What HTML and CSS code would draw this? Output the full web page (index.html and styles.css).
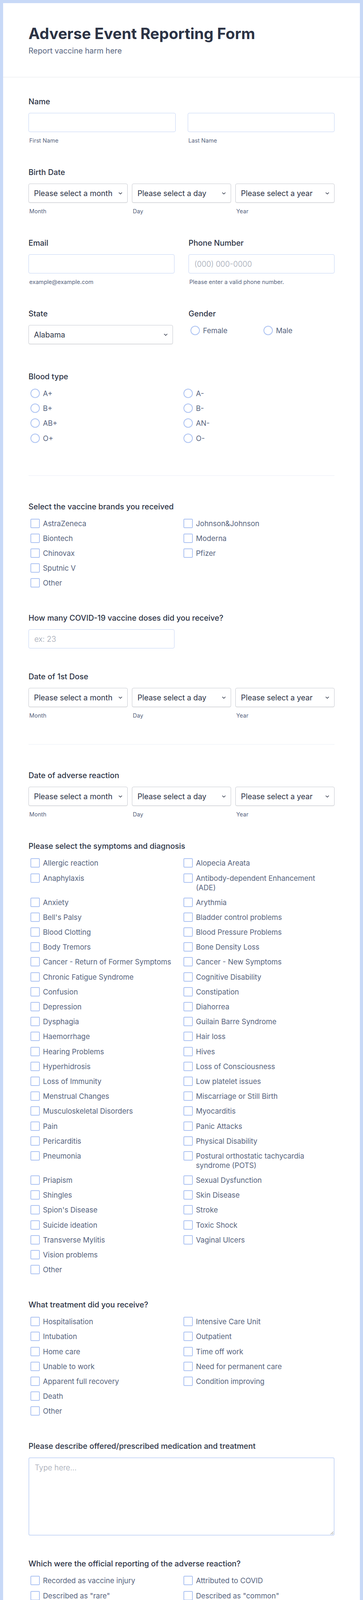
FILE: index.html
```html
<!DOCTYPE html>
<html lang="en">
<head>
  <meta charset="UTF-8" />
  <meta name="viewport" content="width=device-width, initial-scale=1.0" />
  <title>Adverse Event Reporting Form</title>
  <link rel="stylesheet" href="styles.css">
</head>
<body>

  <form class="form-card" onsubmit="return false">
    <header class="form-header">
      <h1>Adverse Event Reporting Form</h1>
      <p>Report vaccine harm here</p>
    </header>

    <div class="form-body">

      <div class="field">
        <label class="field-label">Name</label>
        <div class="cols-2 name-cols">
          <div>
            <input type="text" class="text-input" />
            <span class="sublabel">First Name</span>
          </div>
          <div>
            <input type="text" class="text-input" />
            <span class="sublabel">Last Name</span>
          </div>
        </div>
      </div>

      <div class="field">
        <label class="field-label">Birth Date</label>
        <div class="date-cols">
          <div>
            <div class="select-wrap">
              <select><option>Please select a month</option></select>
              <svg class="chevron" viewBox="0 0 10 6"><path d="M1 1l4 4 4-4" /></svg>
            </div>
            <span class="sublabel">Month</span>
          </div>
          <div>
            <div class="select-wrap">
              <select><option>Please select a day</option></select>
              <svg class="chevron" viewBox="0 0 10 6"><path d="M1 1l4 4 4-4" /></svg>
            </div>
            <span class="sublabel">Day</span>
          </div>
          <div>
            <div class="select-wrap">
              <select><option>Please select a year</option></select>
              <svg class="chevron" viewBox="0 0 10 6"><path d="M1 1l4 4 4-4" /></svg>
            </div>
            <span class="sublabel">Year</span>
          </div>
        </div>
      </div>

      <div class="cols-2 field-pair">
        <div class="field">
          <label class="field-label">Email</label>
          <input type="email" class="text-input" />
          <span class="sublabel">example@example.com</span>
        </div>
        <div class="field">
          <label class="field-label">Phone Number</label>
          <input type="tel" class="text-input" placeholder="(000) 000-0000" />
          <span class="sublabel">Please enter a valid phone number.</span>
        </div>
      </div>

      <div class="cols-2 field-pair gap-lg">
        <div class="field">
          <label class="field-label">State</label>
          <div class="select-wrap state-select">
            <select><option>Alabama</option><option>Alaska</option><option>Arizona</option></select>
            <svg class="chevron" viewBox="0 0 10 6"><path d="M1 1l4 4 4-4" /></svg>
          </div>
        </div>
        <div class="field options">
          <label class="field-label">Gender</label>
          <div class="option-grid">
            <label class="option"><input type="radio" name="gender" /><span>Female</span></label>
            <label class="option"><input type="radio" name="gender" /><span>Male</span></label>
          </div>
        </div>
      </div>

      <div class="field options">
        <label class="field-label">Blood type</label>
        <div class="option-grid">
          <label class="option"><input type="radio" name="blood" /><span>A+</span></label>
          <label class="option"><input type="radio" name="blood" /><span>A-</span></label>
          <label class="option"><input type="radio" name="blood" /><span>B+</span></label>
          <label class="option"><input type="radio" name="blood" /><span>B-</span></label>
          <label class="option"><input type="radio" name="blood" /><span>AB+</span></label>
          <label class="option"><input type="radio" name="blood" /><span>AN-</span></label>
          <label class="option"><input type="radio" name="blood" /><span>O+</span></label>
          <label class="option"><input type="radio" name="blood" /><span>O-</span></label>
        </div>
      </div>

      <hr class="divider divider-wide" />

      <div class="field options">
        <label class="field-label">Select the vaccine brands you received</label>
        <div class="option-grid">
          <label class="option"><input type="checkbox" /><span>AstraZeneca</span></label>
          <label class="option"><input type="checkbox" /><span>Johnson&amp;Johnson</span></label>
          <label class="option"><input type="checkbox" /><span>Biontech</span></label>
          <label class="option"><input type="checkbox" /><span>Moderna</span></label>
          <label class="option"><input type="checkbox" /><span>Chinovax</span></label>
          <label class="option"><input type="checkbox" /><span>Pfizer</span></label>
          <label class="option"><input type="checkbox" /><span>Sputnic V</span></label>
          <label class="option other"><input type="checkbox" /><span>Other</span></label>
        </div>
      </div>

      <div class="field">
        <label class="field-label">How many COVID-19 vaccine doses did you receive?</label>
        <div class="cols-2 field-pair">
          <input type="number" class="text-input" placeholder="ex: 23" />
        </div>
      </div>

      <div class="field">
        <label class="field-label">Date of 1st Dose</label>
        <div class="date-cols">
          <div>
            <div class="select-wrap">
              <select><option>Please select a month</option></select>
              <svg class="chevron" viewBox="0 0 10 6"><path d="M1 1l4 4 4-4" /></svg>
            </div>
            <span class="sublabel">Month</span>
          </div>
          <div>
            <div class="select-wrap">
              <select><option>Please select a day</option></select>
              <svg class="chevron" viewBox="0 0 10 6"><path d="M1 1l4 4 4-4" /></svg>
            </div>
            <span class="sublabel">Day</span>
          </div>
          <div>
            <div class="select-wrap">
              <select><option>Please select a year</option></select>
              <svg class="chevron" viewBox="0 0 10 6"><path d="M1 1l4 4 4-4" /></svg>
            </div>
            <span class="sublabel">Year</span>
          </div>
        </div>
      </div>

      <hr class="divider divider-narrow" />

      <div class="field">
        <label class="field-label">Date of adverse reaction</label>
        <div class="date-cols">
          <div>
            <div class="select-wrap">
              <select><option>Please select a month</option></select>
              <svg class="chevron" viewBox="0 0 10 6"><path d="M1 1l4 4 4-4" /></svg>
            </div>
            <span class="sublabel">Month</span>
          </div>
          <div>
            <div class="select-wrap">
              <select><option>Please select a day</option></select>
              <svg class="chevron" viewBox="0 0 10 6"><path d="M1 1l4 4 4-4" /></svg>
            </div>
            <span class="sublabel">Day</span>
          </div>
          <div>
            <div class="select-wrap">
              <select><option>Please select a year</option></select>
              <svg class="chevron" viewBox="0 0 10 6"><path d="M1 1l4 4 4-4" /></svg>
            </div>
            <span class="sublabel">Year</span>
          </div>
        </div>
      </div>

      <div class="field options">
        <label class="field-label">Please select the symptoms and diagnosis</label>
        <div class="option-grid">
          <label class="option"><input type="checkbox" /><span>Allergic reaction</span></label>
          <label class="option"><input type="checkbox" /><span>Alopecia Areata</span></label>
          <label class="option"><input type="checkbox" /><span>Anaphylaxis</span></label>
          <label class="option"><input type="checkbox" /><span>Antibody-dependent Enhancement (ADE)</span></label>
          <label class="option"><input type="checkbox" /><span>Anxiety</span></label>
          <label class="option"><input type="checkbox" /><span>Arythmia</span></label>
          <label class="option"><input type="checkbox" /><span>Bell's Palsy</span></label>
          <label class="option"><input type="checkbox" /><span>Bladder control problems</span></label>
          <label class="option"><input type="checkbox" /><span>Blood Clotting</span></label>
          <label class="option"><input type="checkbox" /><span>Blood Pressure Problems</span></label>
          <label class="option"><input type="checkbox" /><span>Body Tremors</span></label>
          <label class="option"><input type="checkbox" /><span>Bone Density Loss</span></label>
          <label class="option"><input type="checkbox" /><span>Cancer - Return of Former Symptoms</span></label>
          <label class="option"><input type="checkbox" /><span>Cancer - New Symptoms</span></label>
          <label class="option"><input type="checkbox" /><span>Chronic Fatigue Syndrome</span></label>
          <label class="option"><input type="checkbox" /><span>Cognitive Disability</span></label>
          <label class="option"><input type="checkbox" /><span>Confusion</span></label>
          <label class="option"><input type="checkbox" /><span>Constipation</span></label>
          <label class="option"><input type="checkbox" /><span>Depression</span></label>
          <label class="option"><input type="checkbox" /><span>Diahorrea</span></label>
          <label class="option"><input type="checkbox" /><span>Dysphagia</span></label>
          <label class="option"><input type="checkbox" /><span>Guilain Barre Syndrome</span></label>
          <label class="option"><input type="checkbox" /><span>Haemorrhage</span></label>
          <label class="option"><input type="checkbox" /><span>Hair loss</span></label>
          <label class="option"><input type="checkbox" /><span>Hearing Problems</span></label>
          <label class="option"><input type="checkbox" /><span>Hives</span></label>
          <label class="option"><input type="checkbox" /><span>Hyperhidrosis</span></label>
          <label class="option"><input type="checkbox" /><span>Loss of Consciousness</span></label>
          <label class="option"><input type="checkbox" /><span>Loss of Immunity</span></label>
          <label class="option"><input type="checkbox" /><span>Low platelet issues</span></label>
          <label class="option"><input type="checkbox" /><span>Menstrual Changes</span></label>
          <label class="option"><input type="checkbox" /><span>Miscarriage or Still Birth</span></label>
          <label class="option"><input type="checkbox" /><span>Musculoskeletal Disorders</span></label>
          <label class="option"><input type="checkbox" /><span>Myocarditis</span></label>
          <label class="option"><input type="checkbox" /><span>Pain</span></label>
          <label class="option"><input type="checkbox" /><span>Panic Attacks</span></label>
          <label class="option"><input type="checkbox" /><span>Pericarditis</span></label>
          <label class="option"><input type="checkbox" /><span>Physical Disability</span></label>
          <label class="option"><input type="checkbox" /><span>Pneumonia</span></label>
          <label class="option"><input type="checkbox" /><span>Postural orthostatic tachycardia syndrome (POTS)</span></label>
          <label class="option"><input type="checkbox" /><span>Priapism</span></label>
          <label class="option"><input type="checkbox" /><span>Sexual Dysfunction</span></label>
          <label class="option"><input type="checkbox" /><span>Shingles</span></label>
          <label class="option"><input type="checkbox" /><span>Skin Disease</span></label>
          <label class="option"><input type="checkbox" /><span>Spion's Disease</span></label>
          <label class="option"><input type="checkbox" /><span>Stroke</span></label>
          <label class="option"><input type="checkbox" /><span>Suicide ideation</span></label>
          <label class="option"><input type="checkbox" /><span>Toxic Shock</span></label>
          <label class="option"><input type="checkbox" /><span>Transverse Mylitis</span></label>
          <label class="option"><input type="checkbox" /><span>Vaginal Ulcers</span></label>
          <label class="option"><input type="checkbox" /><span>Vision problems</span></label>
          <label class="option other"><input type="checkbox" /><span>Other</span></label>
        </div>
      </div>

      <div class="field options">
        <label class="field-label">What treatment did you receive?</label>
        <div class="option-grid">
          <label class="option"><input type="checkbox" /><span>Hospitalisation</span></label>
          <label class="option"><input type="checkbox" /><span>Intensive Care Unit</span></label>
          <label class="option"><input type="checkbox" /><span>Intubation</span></label>
          <label class="option"><input type="checkbox" /><span>Outpatient</span></label>
          <label class="option"><input type="checkbox" /><span>Home care</span></label>
          <label class="option"><input type="checkbox" /><span>Time off work</span></label>
          <label class="option"><input type="checkbox" /><span>Unable to work</span></label>
          <label class="option"><input type="checkbox" /><span>Need for permanent care</span></label>
          <label class="option"><input type="checkbox" /><span>Apparent full recovery</span></label>
          <label class="option"><input type="checkbox" /><span>Condition improving</span></label>
          <label class="option"><input type="checkbox" /><span>Death</span></label>
          <label class="option other"><input type="checkbox" /><span>Other</span></label>
        </div>
      </div>

      <div class="field">
        <label class="field-label">Please describe offered/prescribed medication and treatment</label>
        <textarea class="text-area" placeholder="Type here..."></textarea>
      </div>

      <div class="field options">
        <label class="field-label">Which were the official reporting of the adverse reaction?</label>
        <div class="option-grid">
          <label class="option"><input type="checkbox" /><span>Recorded as vaccine injury</span></label>
          <label class="option"><input type="checkbox" /><span>Attributed to COVID</span></label>
          <label class="option"><input type="checkbox" /><span>Described as "rare"</span></label>
          <label class="option"><input type="checkbox" /><span>Described as "common"</span></label>
          <label class="option"><input type="checkbox" /><span>Inconclusive</span></label>
          <label class="option other"><input type="checkbox" /><span>Other</span></label>
        </div>
      </div>

      <hr class="divider" />

      <div class="field options">
        <label class="field-label">What were your motivations for being vaccinated?</label>
        <div class="option-grid">
          <label class="option"><input type="checkbox" /><span>Belief to science</span></label>
          <label class="option"><input type="checkbox" /><span>Government policy</span></label>
          <label class="option"><input type="checkbox" /><span>Business requirement</span></label>
          <label class="option"><input type="checkbox" /><span>Educational requirement</span></label>
          <label class="option"><input type="checkbox" /><span>Peer pressure</span></label>
          <label class="option"><input type="checkbox" /><span>Advertising</span></label>
          <label class="option"><input type="checkbox" /><span>Celebrity influence</span></label>
          <label class="option"><input type="checkbox" /><span>Protect family</span></label>
          <label class="option"><input type="checkbox" /><span>Need of travel</span></label>
          <label class="option"><input type="checkbox" /><span>Common good</span></label>
          <label class="option other"><input type="checkbox" /><span>Other</span></label>
        </div>
      </div>

      <div class="field options statements">
        <label class="field-label">Which of the following statements have been told at site of vaccination?</label>
        <div class="option-list">
          <label class="option"><input type="checkbox" /><span>Was told that vaccines are perfectly safe</span></label>
          <label class="option"><input type="checkbox" /><span>Was told that side effects will be brief and harmless</span></label>
          <label class="option"><input type="checkbox" /><span>Was told that vaccines can cause harm but it is worth the risk</span></label>
          <label class="option"><input type="checkbox" /><span>Received a product information document</span></label>
          <label class="option"><input type="checkbox" /><span>Was told that the Government has indemnified vaccine manufacturers against all claims for the harm caused by their products.</span></label>
          <label class="option"><input type="checkbox" /><span>Was told the benefits and risks of the vaccine</span></label>
          <label class="option"><input type="checkbox" /><span>Medical staff checked medical history</span></label>
          <label class="option"><input type="checkbox" /><span>Was given time to think about it and get a second opinion</span></label>
          <label class="option"><input type="checkbox" /><span>Was advised that there is a system for reporting online the adverse consequences of vaccination.</span></label>
        </div>
      </div>

      <div class="field options">
        <label class="field-label">Attitude to COVID-19 vaccination</label>
        <div class="option-list">
          <label class="option"><input type="checkbox" /><span>I would accept another vaccination or booster shot if instructed by the authorities</span></label>
          <label class="option"><input type="checkbox" /><span>I would not accept another vaccination</span></label>
          <label class="option"><input type="checkbox" /><span>I will encourage friends to be vaccinated</span></label>
          <label class="option"><input type="checkbox" /><span>I will discourage friends from being vaccinated</span></label>
          <label class="option"><input type="checkbox" /><span>The vaccination program should stop</span></label>
        </div>
      </div>

      <div class="field last">
        <label class="field-label">Further questions and comments</label>
        <textarea class="text-area" placeholder="Type here..."></textarea>
      </div>

    </div>

    <div class="form-footer">
      <button type="submit" class="submit-btn">Submit</button>
    </div>
  </form>

</body>
</html>
```

FILE: styles.css
```css
html {
  background: #c8d9f7;
}

body {
  margin: 8px;
  font-family: Inter, "Noto Sans", Arial, sans-serif;
  color: #2c3345;
}

.form-card {
  background: #fff;
}

.form-header {
  padding: 55px 65px;
  border-bottom: 1px solid #e5e7eb;
}

.form-header h1 {
  margin: 0;
  font-size: 39px;
  line-height: 46px;
  font-weight: 700;
  color: #2c3345;
}

.form-header p {
  margin: 9px 0 0;
  font-size: 19.6px;
  line-height: 24px;
  color: #57647e;
}

.form-body {
  padding: 50px 65px 31px;
}

.field {
  margin-bottom: 60px;
}

.field.options {
  margin-bottom: 66px;
}

.field.statements {
  margin-bottom: 60px;
}

.field.last {
  margin-bottom: 0;
}

.field-label {
  display: block;
  font-size: 19.8px;
  line-height: 24px;
  font-weight: 500;
  color: #2c3345;
  margin-bottom: 17px;
}

.options .field-label {
  margin-bottom: 19px;
}

.cols-2 {
  display: grid;
  grid-template-columns: 1fr 1fr;
}

.name-cols {
  column-gap: 31px;
}

.field-pair {
  column-gap: 36px;
}

.field-pair .field {
  margin-bottom: 0;
}

.field-pair + .field,
.field-pair + .field-pair {
  margin-top: 60px;
}

.field-pair.gap-lg + .field {
  margin-top: 71px;
}

.date-cols {
  display: grid;
  grid-template-columns: repeat(3, 1fr);
  column-gap: 11.5px;
}

.sublabel {
  display: block;
  margin-top: 13px;
  font-size: 14.6px;
  line-height: 18px;
  color: #57647e;
  padding-left: 2px;
}

.text-input {
  display: block;
  box-sizing: border-box;
  width: 100%;
  height: 49px;
  margin: 0;
  padding: 0 14px;
  border: 1px solid #c3d3f4;
  border-radius: 4px;
  font-family: inherit;
  font-size: 19.4px;
  color: #2c3345;
  background: #fff;
}

.text-input::placeholder,
.text-area::placeholder {
  color: #a0a6b3;
  font-weight: 300;
}

.select-wrap {
  position: relative;
}

.select-wrap select {
  display: block;
  box-sizing: border-box;
  width: 100%;
  height: 49px;
  margin: 0;
  padding: 0 30px 0 13px;
  border: 1px solid #c6c9d0;
  border-radius: 4px;
  box-shadow: 0 1px 1px rgba(0, 0, 0, 0.08);
  appearance: none;
  -webkit-appearance: none;
  background: #fff;
  font-family: inherit;
  font-size: 19.4px;
  color: #2c3345;
}

.state-select {
  width: 370px;
}

.chevron {
  position: absolute;
  right: 14px;
  top: 50%;
  width: 9px;
  height: 6px;
  margin-top: -3px;
  fill: none;
  stroke: #2c3345;
  stroke-width: 1.6;
  stroke-linecap: round;
  stroke-linejoin: round;
  pointer-events: none;
}

.option-grid {
  display: grid;
  grid-template-columns: 1fr 1fr;
  row-gap: 14.2px;
}

.option-list {
  display: flex;
  flex-direction: column;
  gap: 14px;
  padding-right: 17px;
}

.option {
  display: flex;
  align-items: flex-start;
  gap: 8px;
  padding-left: 5px;
  font-size: 18.5px;
  line-height: 24px;
  color: #57647e;
}

.option.other {
  grid-column: 1 / -1;
}

.option input {
  flex-shrink: 0;
  appearance: none;
  -webkit-appearance: none;
  width: 24px;
  height: 24px;
  margin: 0;
  border: 2px solid #adc3f2;
  border-radius: 3px;
  background: #fff;
}

.option input[type="radio"] {
  border-radius: 50%;
}

.divider {
  height: 0;
  margin: 71px 0 67px;
  border: 0;
  border-top: 1px solid #eaeef6;
}

.divider-wide {
  margin-top: 83px;
}

.divider-narrow {
  margin-top: 64px;
}

.text-area {
  display: block;
  box-sizing: border-box;
  width: 100%;
  height: 200px;
  margin: 0;
  padding: 12px 14px;
  border: 2px solid #cbdaf7;
  border-radius: 4px;
  font-family: inherit;
  font-size: 19.4px;
  line-height: 24px;
  color: #2c3345;
}

.form-footer {
  border-top: 1px solid #eaeef6;
  padding: 37px 0 46px;
  text-align: center;
}

.submit-btn {
  display: block;
  margin: 0 auto;
  width: 222px;
  height: 70px;
  border: none;
  border-radius: 5px;
  background: #c8d9f7;
  color: #2c3345;
  font-family: inherit;
  font-size: 23px;
  font-weight: 500;
  cursor: pointer;
}
```
